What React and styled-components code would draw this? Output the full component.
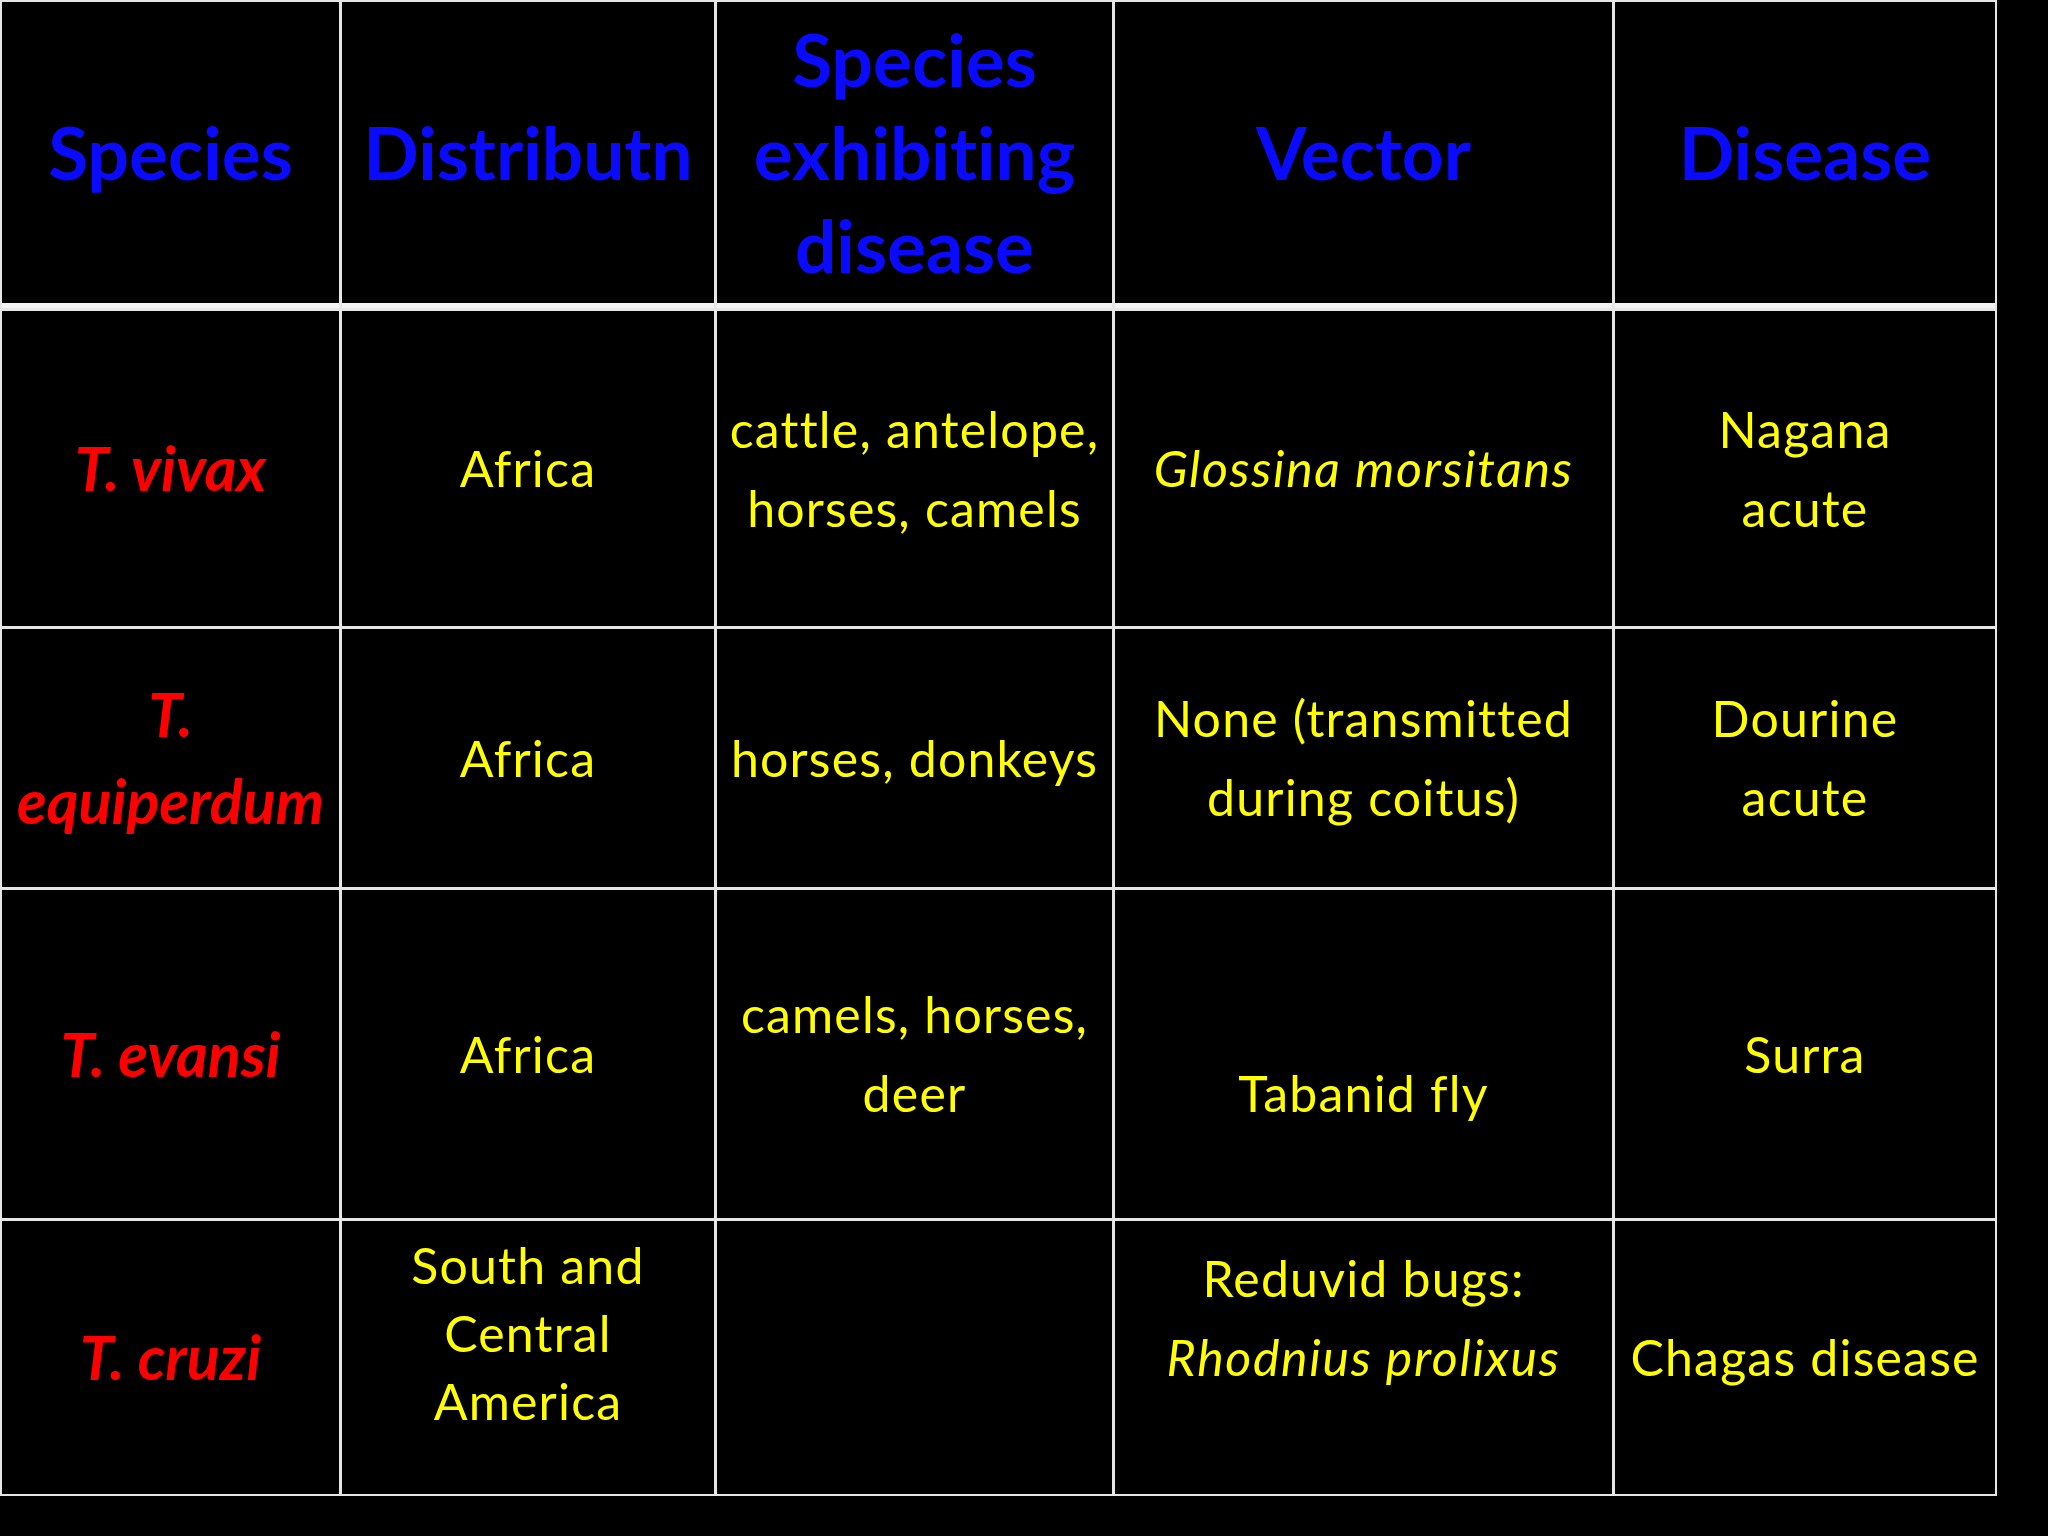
import React from "react";
import styled, { createGlobalStyle } from "styled-components";

const GlobalStyle = createGlobalStyle`
  html, body {
    margin: 0;
    padding: 0;
    background: #000;
  }
  body {
    width: 2048px;
    height: 1536px;
    overflow: hidden;
    font-family: Lato, "Open Sans", sans-serif;
    font-variant-ligatures: none;
  }
`;

const Slide = styled.div`
  width: 2048px;
  height: 1536px;
  background: #000;
`;

const Table = styled.div`
  display: grid;
  width: 1997px;
  box-sizing: border-box;
  grid-template-columns: 337px 372px 395px 497px 380px;
  grid-template-rows: 306px 315px 258px 328px 273px;
  gap: 3px;
  padding: 2px;
  background: #e6e6e6;
`;

const HeadCell = styled.div`
  display: flex;
  align-items: center;
  justify-content: center;
  text-align: center;
  background: #000;
  border-bottom: 5px solid #f2f2f2;
  color: #0a0aff;
  font-weight: 700;
  font-size: 73px;
  line-height: 93px;
`;

const Cell = styled.div`
  display: flex;
  align-items: center;
  justify-content: center;
  text-align: center;
  background: #000;
  color: #ffff00;
  font-size: 50px;
  letter-spacing: 1.2px;
  line-height: ${(p) => p.$lh || 79}px;
  padding-bottom: ${(p) => p.$lift || 0}px;
  box-sizing: border-box;
  white-space: nowrap;
`;

const Text = styled.div`
  display: block;
`;

const Species = styled.span`
  color: #ff0000;
  font-weight: 700;
  font-style: italic;
  font-size: 61px;
  letter-spacing: 0;
  line-height: 85px;
`;

const Latin = styled.span`
  font-style: italic;
  letter-spacing: 1.7px;
`;

const rows = [
  {
    species: "T. vivax",
    dist: "Africa",
    hosts: <>cattle, antelope,<br />horses, camels</>,
    vector: <Latin>Glossina morsitans</Latin>,
    disease: <>Nagana<br />acute</>,
  },
  {
    species: <>T.<br />equiperdum</>,
    dist: "Africa",
    hosts: "horses, donkeys",
    vector: <>None (transmitted<br />during coitus)</>,
    disease: <>Dourine<br />acute</>,
  },
  {
    species: "T. evansi",
    dist: "Africa",
    hosts: <>camels, horses,<br />deer</>,
    vector: <><br />Tabanid fly</>,
    disease: "Surra",
  },
  {
    species: "T. cruzi",
    dist: <>South and<br />Central<br />America</>,
    distLh: 68,
    distLift: 50,
    hosts: "",
    vector: <>Reduvid bugs:<br /><Latin>Rhodnius prolixus</Latin><br />&nbsp;</>,
    disease: "Chagas disease",
  },
];

const headers = [
  "Species",
  "Distributn",
  <>Species<br />exhibiting<br />disease</>,
  "Vector",
  "Disease",
];

export default function App() {
  return (
    <Slide>
      <GlobalStyle />
      <Table>
        {headers.map((h, i) => (
          <HeadCell key={i}>
            <Text>{h}</Text>
          </HeadCell>
        ))}
        {rows.map((r, i) => (
          <React.Fragment key={i}>
            <Cell>
              <Text>
                <Species>{r.species}</Species>
              </Text>
            </Cell>
            <Cell $lh={r.distLh} $lift={r.distLift}>
              <Text>{r.dist}</Text>
            </Cell>
            <Cell>
              <Text>{r.hosts}</Text>
            </Cell>
            <Cell>
              <Text>{r.vector}</Text>
            </Cell>
            <Cell>
              <Text>{r.disease}</Text>
            </Cell>
          </React.Fragment>
        ))}
      </Table>
    </Slide>
  );
}
